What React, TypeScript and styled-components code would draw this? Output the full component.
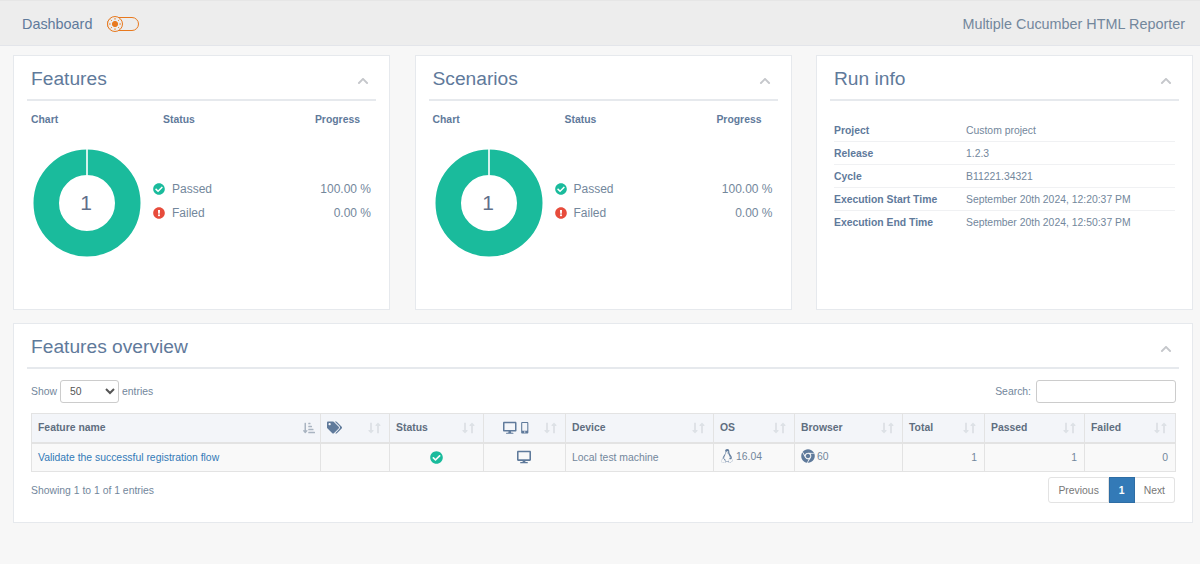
import React from 'react';
import styled, { createGlobalStyle } from 'styled-components';
import {
  FaCheckCircle,
  FaChevronUp,
  FaChrome,
  FaDesktop,
  FaExclamationCircle,
  FaLinux,
  FaLongArrowAltDown,
  FaLongArrowAltUp,
  FaMobileAlt,
  FaSortAmountDownAlt,
  FaTags,
} from 'react-icons/fa';

const GlobalStyle = createGlobalStyle`
  html, body {
    margin: 0;
    padding: 0;
    background: #f7f7f7;
    color: #73879c;
    font-family: "Liberation Sans", Arial, sans-serif;
    font-size: 12px;
  }
`;

const Page = styled.div`
  width: 1200px;
  height: 564px;
  overflow: hidden;
`;

const TopBar = styled.header`
  height: 46px;
  box-sizing: border-box;
  display: flex;
  align-items: center;
  justify-content: space-between;
  padding: 2px 15px 0 22px;
  background: #ededed;
  border-top: 1px solid #e6e6e6;
  border-bottom: 1px solid #e3e5ea;
`;

const Brand = styled.div`
  display: flex;
  align-items: center;
  gap: 15px;
  font-size: 14.4px;
  color: #5f7a9b;
`;

const ReporterName = styled.div`
  font-size: 14.4px;
  color: #73879c;
`;

const Toggle = styled.div`
  position: relative;
  width: 32px;
  height: 14px;
  box-sizing: border-box;
  border: 1px solid #e8791e;
  border-radius: 7px;
`;

const ToggleKnob = styled.div`
  position: absolute;
  left: -1px;
  top: -2px;
  width: 16px;
  height: 16px;
  box-sizing: border-box;
  border: 1px solid #e8791e;
  border-radius: 50%;
  background: #ededed;
  display: flex;
  align-items: center;
  justify-content: center;
`;

const Content = styled.main`
  padding: 9px 7px 0 13px;
  display: flex;
  flex-direction: column;
  gap: 13px;
`;

const TopRow = styled.div`
  display: grid;
  grid-template-columns: repeat(3, 377px);
  column-gap: 24.5px;
`;

const Panel = styled.section<{ $height: number }>`
  box-sizing: border-box;
  height: ${({ $height }) => $height}px;
  padding: 0 13px;
  background: #fff;
  border: 1px solid #e6e9ed;
`;

const PanelHead = styled.div`
  height: 45px;
  box-sizing: border-box;
  display: flex;
  align-items: center;
  justify-content: space-between;
  padding: 3px 7px 0 4px;
  border-bottom: 2px solid #e6e9ed;
`;

const PanelTitle = styled.h2`
  margin: 0;
  font-size: 19.2px;
  font-weight: 400;
  color: #5f7a9b;
`;

const Collapse = styled.span`
  display: flex;
  padding-top: 4px;
  color: #c5c7cb;
  font-size: 12px;
`;

const ChartHeads = styled.div`
  display: grid;
  grid-template-columns: 132px 1fr auto;
  padding: 13px 16px 0 4px;
  font-size: 10.4px;
  font-weight: 700;
  color: #5f7a9b;
`;

const ChartBody = styled.div`
  display: flex;
  align-items: center;
  gap: 12px;
  padding: 24px 5px 0 6px;
`;

const Legend = styled.div`
  flex: 1;
  display: flex;
  flex-direction: column;
  gap: 9px;
  padding-bottom: 4px;
`;

const LegendRow = styled.div`
  height: 15px;
  display: flex;
  align-items: center;
  font-size: 12px;
  color: #73879c;
`;

const LegendIcon = styled.span<{ $color: string }>`
  display: flex;
  width: 19px;
  font-size: 12px;
  color: ${({ $color }) => $color};
`;

const LegendValue = styled.span`
  margin-left: auto;
`;

const InfoTable = styled.table`
  width: calc(100% - 8px);
  margin: 18px 4px 0;
  border-collapse: collapse;
  font-size: 10.4px;

  tr + tr td {
    border-top: 1px solid #f0f1f3;
  }

  td {
    height: 22px;
    padding: 0;
  }

  td:first-child {
    width: 132px;
    font-weight: 700;
    color: #5f7a9b;
  }
`;

const Controls = styled.div`
  display: flex;
  align-items: center;
  justify-content: space-between;
  padding: 10px 3px 0 4px;
  height: 24px;
  font-size: 10.4px;
`;

const ControlGroup = styled.div<{ $gap: number }>`
  display: flex;
  align-items: center;
  gap: ${({ $gap }) => $gap}px;
`;

const EntriesSelect = styled.select`
  width: 59px;
  height: 23px;
  box-sizing: border-box;
  padding: 0 0 0 5px;
  background: #fff;
  border: 1px solid #ccc;
  border-radius: 3px;
  color: #555;
  font: 10.4px "Liberation Sans", Arial, sans-serif;
`;

const SearchInput = styled.input`
  width: 140px;
  height: 23px;
  box-sizing: border-box;
  background: #fff;
  border: 1px solid #ccc;
  border-radius: 3px;
`;

const DataTable = styled.table`
  width: 1144px;
  margin: 10px 0 0 4px;
  table-layout: fixed;
  border-collapse: collapse;
  font-size: 10.4px;
`;

const HeadCell = styled.th`
  position: relative;
  height: 29px;
  box-sizing: border-box;
  padding: 0 6px;
  background: #f3f5f9;
  border: 1px solid #e3e3e3;
  border-bottom-width: 2px;
  text-align: left;
  font-weight: 700;
  color: #5f6e80;
`;

const SortIcon = styled.span<{ $active?: boolean }>`
  position: absolute;
  right: 5px;
  top: 8px;
  display: flex;
  font-size: 12px;
  color: ${({ $active }) => ($active ? '#a9b4c1' : '#dde1e6')};
`;

const BodyCell = styled.td<{ $align?: string }>`
  height: 29px;
  box-sizing: border-box;
  padding: 0 7px 0 6px;
  background: #f9f9f9;
  border: 1px solid #e3e3e3;
  text-align: ${({ $align }) => $align ?? 'left'};
`;

const FeatureLink = styled.a`
  color: #337ab7;
  text-decoration: none;
`;

const IconText = styled.span`
  display: inline-flex;
  align-items: center;
  gap: 2px;
`;

const CellIcon = styled.span<{ $color?: string; $size?: number }>`
  display: inline-flex;
  vertical-align: middle;
  font-size: ${({ $size }) => $size ?? 13}px;
  color: ${({ $color }) => $color ?? '#5f7a9b'};
`;

const DeviceHeadIcons = styled.span`
  display: flex;
  align-items: center;
  gap: 2px;
  padding-left: 13px;
  color: #5f7a9b;
  font-size: 13.5px;
`;

const PhoneIcon = styled(FaMobileAlt)`
  font-size: 11.5px;
`;

const Footer = styled.div`
  display: flex;
  align-items: center;
  justify-content: space-between;
  padding: 5px 4px 0 4px;
  font-size: 10.4px;
`;

const Pager = styled.div`
  display: flex;
  height: 26px;
`;

const PageButton = styled.span<{ $current?: boolean }>`
  display: flex;
  align-items: center;
  box-sizing: border-box;
  padding: 0 9px;
  background: ${({ $current }) => ($current ? '#337ab7' : '#fff')};
  border: 1px solid ${({ $current }) => ($current ? '#2e6da4' : '#e3e3e3')};
  color: ${({ $current }) => ($current ? '#fff' : '#777')};
  font-weight: ${({ $current }) => ($current ? 700 : 400)};

  &:first-child {
    border-radius: 3px 0 0 3px;
  }

  &:last-child {
    border-radius: 0 3px 3px 0;
    border-left: none;
  }
`;

function Donut() {
  return (
    <svg width="108" height="108" viewBox="0 0 108 108">
      <circle cx="54" cy="54" r="40.75" fill="none" stroke="#1abb9c" strokeWidth="25.5" />
      <rect x="53.2" y="0" width="1.6" height="26" fill="#fff" />
      <text x="53" y="61" textAnchor="middle" fontSize="21" fill="#5f6f8a" fontFamily="Liberation Sans">
        1
      </text>
    </svg>
  );
}

function SunIcon() {
  return (
    <svg width="12" height="12" viewBox="0 0 11 11" stroke="#e8791e" strokeWidth="0.9">
      <circle cx="5.5" cy="5.5" r="2.4" fill="#e8791e" />
      <path d="M5.5 0v1.5M5.5 9.5V11M0 5.5h1.5M9.5 5.5H11M1.6 1.6l1 1M8.4 8.4l1 1M1.6 9.4l1-1M8.4 2.6l1-1" />
    </svg>
  );
}

function ChartCard({ title }: { title: string }) {
  return (
    <Panel $height={255}>
      <PanelHead>
        <PanelTitle>{title}</PanelTitle>
        <Collapse>
          <FaChevronUp />
        </Collapse>
      </PanelHead>
      <ChartHeads>
        <span>Chart</span>
        <span>Status</span>
        <span>Progress</span>
      </ChartHeads>
      <ChartBody>
        <Donut />
        <Legend>
          <LegendRow>
            <LegendIcon $color="#1abb9c">
              <FaCheckCircle />
            </LegendIcon>
            Passed
            <LegendValue>100.00 %</LegendValue>
          </LegendRow>
          <LegendRow>
            <LegendIcon $color="#e74c3c">
              <FaExclamationCircle />
            </LegendIcon>
            Failed
            <LegendValue>0.00 %</LegendValue>
          </LegendRow>
        </Legend>
      </ChartBody>
    </Panel>
  );
}

const runInfo = [
  ['Project', 'Custom project'],
  ['Release', '1.2.3'],
  ['Cycle', 'B11221.34321'],
  ['Execution Start Time', 'September 20th 2024, 12:20:37 PM'],
  ['Execution End Time', 'September 20th 2024, 12:50:37 PM'],
];

function Sort({ active }: { active?: boolean }) {
  return (
    <SortIcon $active={active}>
      {active ? (
        <FaSortAmountDownAlt />
      ) : (
        <>
          <FaLongArrowAltDown />
          <FaLongArrowAltUp style={{ marginLeft: -5 }} />
        </>
      )}
    </SortIcon>
  );
}

const columnWidths = [289, 69, 94, 82, 148, 81, 108, 82, 100, 91];

export default function App() {
  return (
    <Page>
      <GlobalStyle />
      <TopBar>
        <Brand>
          Dashboard
          <Toggle>
            <ToggleKnob>
              <SunIcon />
            </ToggleKnob>
          </Toggle>
        </Brand>
        <ReporterName>Multiple Cucumber HTML Reporter</ReporterName>
      </TopBar>
      <Content>
        <TopRow>
          <ChartCard title="Features" />
          <ChartCard title="Scenarios" />
          <Panel $height={255}>
            <PanelHead>
              <PanelTitle>Run info</PanelTitle>
              <Collapse>
                <FaChevronUp />
              </Collapse>
            </PanelHead>
            <InfoTable>
              <tbody>
                {runInfo.map(([label, value]) => (
                  <tr key={label}>
                    <td>{label}</td>
                    <td>{value}</td>
                  </tr>
                ))}
              </tbody>
            </InfoTable>
          </Panel>
        </TopRow>
        <Panel $height={200}>
          <PanelHead>
            <PanelTitle>Features overview</PanelTitle>
            <Collapse>
              <FaChevronUp />
            </Collapse>
          </PanelHead>
          <Controls>
            <ControlGroup $gap={3}>
              Show
              <EntriesSelect defaultValue="50">
                <option>50</option>
              </EntriesSelect>
              entries
            </ControlGroup>
            <ControlGroup $gap={5}>
              Search:
              <SearchInput />
            </ControlGroup>
          </Controls>
          <DataTable>
            <colgroup>
              {columnWidths.map((width, index) => (
                <col key={index} width={width} />
              ))}
            </colgroup>
            <thead>
              <tr>
                <HeadCell>
                  Feature name
                  <Sort active />
                </HeadCell>
                <HeadCell>
                  <CellIcon $size={15}>
                    <FaTags />
                  </CellIcon>
                  <Sort />
                </HeadCell>
                <HeadCell>
                  Status
                  <Sort />
                </HeadCell>
                <HeadCell>
                  <DeviceHeadIcons>
                    <FaDesktop />
                    <PhoneIcon />
                  </DeviceHeadIcons>
                  <Sort />
                </HeadCell>
                <HeadCell>
                  Device
                  <Sort />
                </HeadCell>
                <HeadCell>
                  OS
                  <Sort />
                </HeadCell>
                <HeadCell>
                  Browser
                  <Sort />
                </HeadCell>
                <HeadCell>
                  Total
                  <Sort />
                </HeadCell>
                <HeadCell>
                  Passed
                  <Sort />
                </HeadCell>
                <HeadCell>
                  Failed
                  <Sort />
                </HeadCell>
              </tr>
            </thead>
            <tbody>
              <tr>
                <BodyCell>
                  <FeatureLink href="#">Validate the successful registration flow</FeatureLink>
                </BodyCell>
                <BodyCell />
                <BodyCell $align="center">
                  <CellIcon $color="#1abb9c">
                    <FaCheckCircle />
                  </CellIcon>
                </BodyCell>
                <BodyCell $align="center">
                  <CellIcon $size={14}>
                    <FaDesktop />
                  </CellIcon>
                </BodyCell>
                <BodyCell>Local test machine</BodyCell>
                <BodyCell>
                  <IconText>
                    <CellIcon $size={14}>
                      <FaLinux />
                    </CellIcon>
                    16.04
                  </IconText>
                </BodyCell>
                <BodyCell>
                  <IconText>
                    <CellIcon $size={14}>
                      <FaChrome />
                    </CellIcon>
                    60
                  </IconText>
                </BodyCell>
                <BodyCell $align="right">1</BodyCell>
                <BodyCell $align="right">1</BodyCell>
                <BodyCell $align="right">0</BodyCell>
              </tr>
            </tbody>
          </DataTable>
          <Footer>
            <span>Showing 1 to 1 of 1 entries</span>
            <Pager>
              <PageButton>Previous</PageButton>
              <PageButton $current>1</PageButton>
              <PageButton>Next</PageButton>
            </Pager>
          </Footer>
        </Panel>
      </Content>
    </Page>
  );
}
